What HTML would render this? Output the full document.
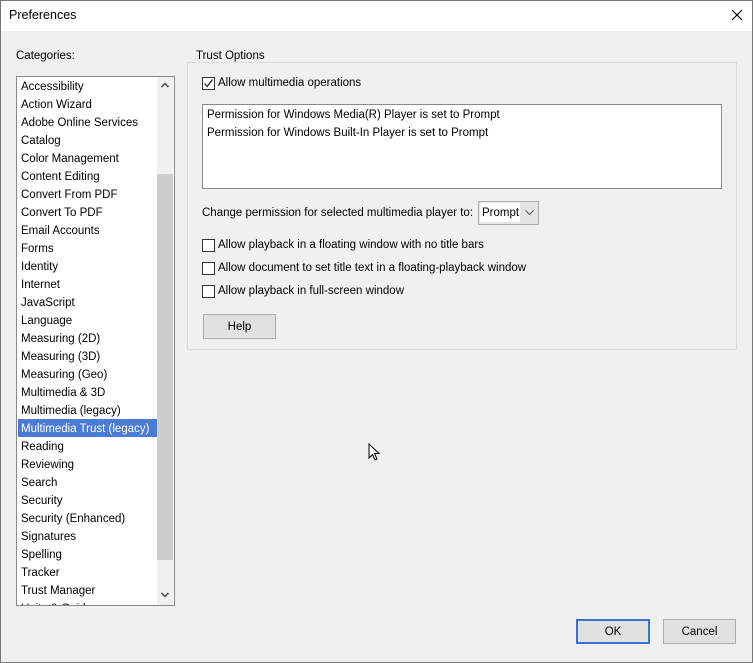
<!DOCTYPE html>
<html><head><meta charset="utf-8"><style>
*{box-sizing:border-box;margin:0;padding:0}
body{width:753px;height:663px;position:relative;background:#f0f0f0;font-family:"Liberation Sans",sans-serif;font-size:11.5px;color:#000;overflow:hidden}
.abs{position:absolute}
.title{left:0;top:0;width:753px;height:31px;background:#fff}
.list{left:16px;top:76px;width:159px;height:530px;background:#fff;border:1px solid #8a8a8a;overflow:hidden}
.row{position:absolute;left:1px;width:139px;height:18px;line-height:20px;padding-left:3px;white-space:nowrap}
.sel{background:#4a7bd5;color:#fff}
.sb{left:140px;top:0;width:16px;height:528px;background:#f0f0f0}
.thumb{left:0;top:97px;width:16px;height:386px;background:#cdcdcd}
.cb{width:13px;height:13px;border:1px solid #333;background:#fff}
.btn{background:#e1e1e1;border:1px solid #adadad;text-align:center}
</style></head><body>
<div class="abs title"></div>
<div class="abs" style="left:9px;top:8px;font-size:12.5px">Preferences</div>
<svg class="abs" style="left:731px;top:9px" width="12" height="12"><path d="M1 1L11 11M11 1L1 11" stroke="#000" stroke-width="1.2"/></svg>
<div class="abs" style="left:16px;top:50px">Categories:</div>
<div class="abs list">
<div class="row" style="top:0">Accessibility</div>
<div class="row" style="top:18px">Action Wizard</div>
<div class="row" style="top:36px">Adobe Online Services</div>
<div class="row" style="top:54px">Catalog</div>
<div class="row" style="top:72px">Color Management</div>
<div class="row" style="top:90px">Content Editing</div>
<div class="row" style="top:108px">Convert From PDF</div>
<div class="row" style="top:126px">Convert To PDF</div>
<div class="row" style="top:144px">Email Accounts</div>
<div class="row" style="top:162px">Forms</div>
<div class="row" style="top:180px">Identity</div>
<div class="row" style="top:198px">Internet</div>
<div class="row" style="top:216px">JavaScript</div>
<div class="row" style="top:234px">Language</div>
<div class="row" style="top:252px">Measuring (2D)</div>
<div class="row" style="top:270px">Measuring (3D)</div>
<div class="row" style="top:288px">Measuring (Geo)</div>
<div class="row" style="top:306px">Multimedia &amp; 3D</div>
<div class="row" style="top:324px">Multimedia (legacy)</div>
<div class="row sel" style="top:342px">Multimedia Trust (legacy)</div>
<div class="row" style="top:360px">Reading</div>
<div class="row" style="top:378px">Reviewing</div>
<div class="row" style="top:396px">Search</div>
<div class="row" style="top:414px">Security</div>
<div class="row" style="top:432px">Security (Enhanced)</div>
<div class="row" style="top:450px">Signatures</div>
<div class="row" style="top:468px">Spelling</div>
<div class="row" style="top:486px">Tracker</div>
<div class="row" style="top:504px">Trust Manager</div>
<div class="row" style="top:522px">Units &amp; Guides</div>
<div class="abs sb"><div class="abs thumb"></div>
<svg class="abs" style="left:4px;top:5px" width="8" height="6"><path d="M0.5 5L4 1.5L7.5 5" stroke="#555" stroke-width="1.6" fill="none"/></svg>
<svg class="abs" style="left:4px;top:515px" width="8" height="6"><path d="M0.5 1L4 4.5L7.5 1" stroke="#555" stroke-width="1.6" fill="none"/></svg>
</div>
</div>
<div class="abs" style="left:187px;top:62px;width:550px;height:288px;border:1px solid #dcdcdc"></div>
<div class="abs" style="left:193px;top:50px;background:#f0f0f0;padding:0 3px">Trust Options</div>
<div class="abs cb" style="left:202px;top:77px"></div>
<svg class="abs" style="left:203px;top:78px" width="11" height="11"><path d="M1.5 5.5L4.2 8.5L9.5 1.5" stroke="#222" stroke-width="1.3" fill="none"/></svg>
<div class="abs" style="left:218px;top:77px">Allow multimedia operations</div>
<div class="abs" style="left:202px;top:104px;width:520px;height:85px;background:#fff;border:1px solid #8a8a8a"></div>
<div class="abs" style="left:207px;top:109px">Permission for Windows Media(R) Player is set to Prompt</div>
<div class="abs" style="left:207px;top:127px">Permission for Windows Built-In Player is set to Prompt</div>
<div class="abs" style="left:202px;top:207px">Change permission for selected multimedia player to:</div>
<div class="abs" style="left:478px;top:201px;width:61px;height:24px;background:#e5e5e5;border:1px solid #adadad"></div>
<div class="abs" style="left:480px;top:203px;width:40px;height:19px;background:#fff"></div>
<div class="abs" style="left:482px;top:207px">Prompt</div>
<svg class="abs" style="left:525px;top:210px" width="9" height="6"><path d="M0.5 0.5L4.5 4.5L8.5 0.5" stroke="#555" fill="none"/></svg>
<div class="abs cb" style="left:202px;top:239px"></div>
<div class="abs" style="left:218px;top:239px">Allow playback in a floating window with no title bars</div>
<div class="abs cb" style="left:202px;top:262px"></div>
<div class="abs" style="left:218px;top:262px">Allow document to set title text in a floating-playback window</div>
<div class="abs cb" style="left:202px;top:285px"></div>
<div class="abs" style="left:218px;top:285px">Allow playback in full-screen window</div>
<div class="abs btn" style="left:203px;top:314px;width:73px;height:25px;line-height:24px">Help</div>
<div class="abs btn" style="left:576px;top:619px;width:74px;height:25px;line-height:22px;border:2px solid #3a72d4">OK</div>
<div class="abs btn" style="left:663px;top:619px;width:73px;height:25px;line-height:24px">Cancel</div>
<svg class="abs" style="left:368px;top:443px" width="13" height="19"><path d="M1 1L1 15L4.5 11.5L7 17L9 16L6.5 10.5L11 10.5Z" fill="#fff" stroke="#000" stroke-width="1"/></svg>
<div class="abs" style="left:0;top:0;width:753px;height:663px;border:1px solid #777;pointer-events:none"></div>
</body></html>
